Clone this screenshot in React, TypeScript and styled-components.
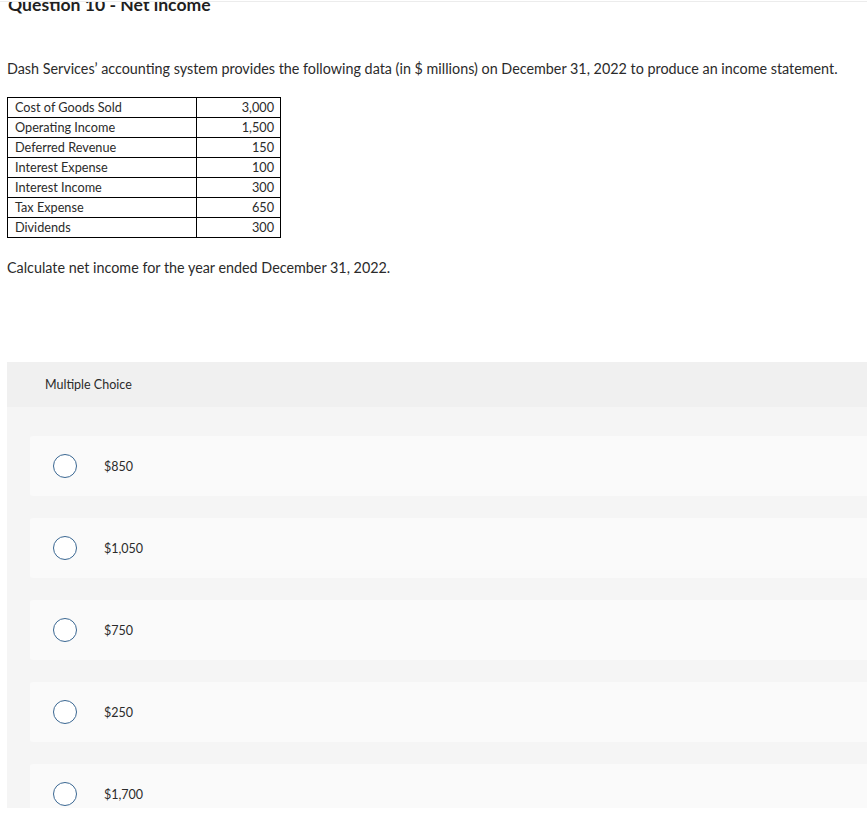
import React from "react";
import styled, { createGlobalStyle } from "styled-components";

const Global = createGlobalStyle`
  html, body { margin: 0; padding: 0; background: #fff; }
  body { font-family: Lato, "Open Sans", sans-serif; color: #2b2b2b; overflow: hidden; }
`;

const Page = styled.div`
  margin-top: 1px;
  border-top: 1px solid #ececec;
  height: 806px;
  overflow: hidden;
  padding-left: 7px;
`;

const Heading = styled.h2`
  margin: -7px 0 0 1px;
  font-size: 17.6px;
  line-height: 20px;
  font-weight: 700;
  color: #1f1f1f;
`;

const Prompt = styled.p`
  margin: 0;
  font-size: 14.35px;
  line-height: 18px;
  color: #2b2b2b;
`;

const Intro = styled(Prompt)`
  margin-top: 45px;
`;

const Question = styled(Prompt)`
  margin-top: 21px;
`;

const Table = styled.table`
  margin-top: 19px;
  border-collapse: collapse;
  width: 274px;
  font-size: 12.7px;
  color: #2b2b2b;
`;

const Cell = styled.td<{ $num?: boolean }>`
  border: 1px solid #000;
  height: 19px;
  padding: 0 6px 0 7px;
  line-height: 19px;
  text-align: ${(p) => (p.$num ? "right" : "left")};
  width: ${(p) => (p.$num ? "70px" : "auto")};
`;

const Panel = styled.section`
  margin-top: 85px;
  width: 880px;
  background: #f5f5f5;
  padding-bottom: 40px;
`;

const PanelHeader = styled.div`
  height: 45px;
  background: #f0f0f0;
  display: flex;
  align-items: center;
  padding-left: 38px;
  font-size: 12.5px;
  color: #2b2b2b;
`;

const Options = styled.div`
  padding: 29px 0 0 23px;
  display: flex;
  flex-direction: column;
  gap: 22px;
`;

const OptionCard = styled.label`
  height: 60px;
  background: #fafafa;
  border-radius: 3px 0 0 3px;
  display: flex;
  align-items: center;
  padding-left: 23px;
  font-size: 12.5px;
  color: #2b2b2b;
  cursor: pointer;
`;

const Radio = styled.span`
  width: 22px;
  height: 22px;
  border: 1.5px solid #3a6792;
  border-radius: 50%;
  background: #fff;
  flex: none;
  margin-right: 27px;
`;

const rows: [string, string][] = [
  ["Cost of Goods Sold", "3,000"],
  ["Operating Income", "1,500"],
  ["Deferred Revenue", "150"],
  ["Interest Expense", "100"],
  ["Interest Income", "300"],
  ["Tax Expense", "650"],
  ["Dividends", "300"],
];

const choices = ["$850", "$1,050", "$750", "$250", "$1,700"];

export default function App() {
  return (
    <>
      <Global />
      <Page>
        <Heading>Question 10 - Net income</Heading>
        <Intro>
          Dash Services’ accounting system provides the following data (in $ millions) on December 31, 2022 to produce an income statement.
        </Intro>
        <Table>
          <tbody>
            {rows.map(([k, v]) => (
              <tr key={k}>
                <Cell>{k}</Cell>
                <Cell $num>{v}</Cell>
              </tr>
            ))}
          </tbody>
        </Table>
        <Question>Calculate net income for the year ended December 31, 2022.</Question>
        <Panel>
          <PanelHeader>Multiple Choice</PanelHeader>
          <Options>
            {choices.map((c) => (
              <OptionCard key={c}>
                <Radio />
                {c}
              </OptionCard>
            ))}
          </Options>
        </Panel>
      </Page>
    </>
  );
}
